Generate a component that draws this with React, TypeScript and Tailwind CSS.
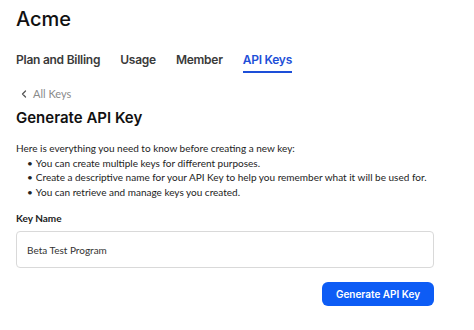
import { ChevronLeft } from "lucide-react";

const tabs = ["Plan and Billing", "Usage", "Member", "API Keys"];

const tips = [
  "You can create multiple keys for different purposes.",
  "Create a descriptive name for your API Key to help you remember what it will be used for.",
  "You can retrieve and manage keys you created.",
];

export default function App() {
  return (
    <div className="w-[474px] h-[330px] bg-white text-[#1a1a1a] px-4 pt-[6px] font-['Lato',sans-serif]">
      {/* Title */}
      <h1 className="text-[20px] font-medium leading-[26px] font-['Inter',sans-serif] text-[#111]">
        Acme
      </h1>

      {/* Tabs */}
      <nav className="flex gap-5 mt-[19px] font-['Inter',sans-serif]">
        {tabs.map((tab) => {
          const active = tab === "API Keys";
          return (
            <div
              key={tab}
              className={`text-[12px] font-semibold leading-[18px] tracking-[-0.25px] pb-[2px] border-b-2 ${
                active ? "text-[#1d4fd8] border-[#1d4fd8]" : "text-[#3a3a3a] border-transparent"
              }`}
            >
              {tab}
            </div>
          );
        })}
      </nav>

      {/* Back link */}
      <div className="flex items-center gap-[3px] h-[14px] mt-[14px] pl-[2px] text-[11px] text-[#8a8a8a]">
        <ChevronLeft size={12} strokeWidth={2.5} className="text-[#555]" />
        <span>All Keys</span>
      </div>

      <h2 className="text-[15px] font-semibold leading-[20px] mt-[7px] font-['Inter',sans-serif] text-[#111]">
        Generate API Key
      </h2>

      {/* Info */}
      <div className="mt-[13px] text-[10px] leading-[14.5px] text-[#222]">
        <p>Here is everything you need to know before creating a new key:</p>
        <ul className="pl-[11px]">
          {tips.map((t) => (
            <li key={t} className="flex gap-[3px]">
              <span>•</span>
              <span>{t}</span>
            </li>
          ))}
        </ul>
      </div>

      {/* Form */}
      <label className="block mt-[12px] text-[10px] leading-[14px] font-bold text-[#222]">
        Key Name
      </label>
      <input
        defaultValue="Beta Test Program"
        className="block w-[418px] h-[37px] mt-[6px] px-[10px] border border-[#d9d9d9] rounded-[4px] text-[10px] text-[#333] outline-none"
      />

      <div className="flex justify-end mt-[14px] w-[418px]">
        <button className="w-[112px] h-[24px] rounded-[6px] bg-[#0d5cf5] text-white text-[10px] font-semibold font-['Inter',sans-serif]">
          Generate API Key
        </button>
      </div>
    </div>
  );
}
